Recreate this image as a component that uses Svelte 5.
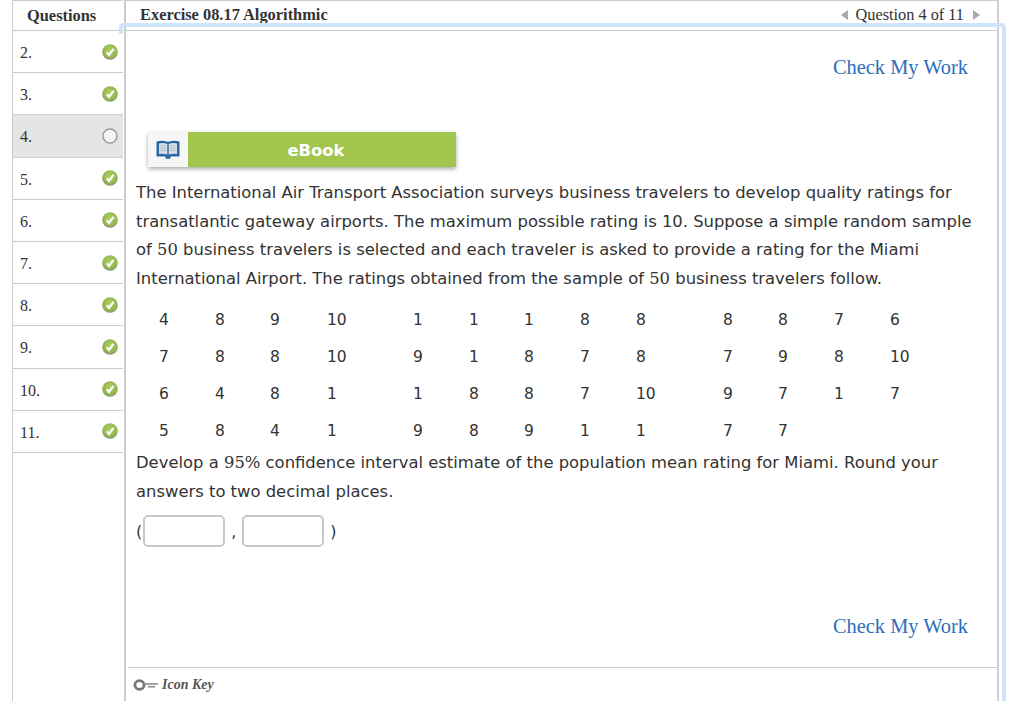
<script>
  const questions = [
    { n: 2, done: true }, { n: 3, done: true }, { n: 4, done: false, current: true },
    { n: 5, done: true }, { n: 6, done: true }, { n: 7, done: true }, { n: 8, done: true },
    { n: 9, done: true }, { n: 10, done: true }, { n: 11, done: true }
  ];

  const ratings = [
    [4, 8, 9, 10, 1, 1, 1, 8, 8, 8, 8, 7, 6],
    [7, 8, 8, 10, 9, 1, 8, 7, 8, 7, 9, 8, 10],
    [6, 4, 8, 1, 1, 8, 8, 7, 10, 9, 7, 1, 7],
    [5, 8, 4, 1, 9, 8, 9, 1, 1, 7, 7]
  ];
</script>

<div class="page">
  <aside class="sidebar">
    <div class="side-head">Questions</div>
    {#each questions as q}
      <div class="q-row" class:current={q.current}>
        <span class="q-num">{q.n}.</span>
        {#if q.done}
          <svg class="status" width="16" height="16" viewBox="0 0 16 16">
            <defs>
              <radialGradient id="g{q.n}" cx="0.5" cy="0.4" r="0.6">
                <stop offset="0" stop-color="#b0cf6a" />
                <stop offset="0.72" stop-color="#93b84b" />
                <stop offset="1" stop-color="#87927a" />
              </radialGradient>
            </defs>
            <circle cx="8" cy="8" r="7.8" fill="url(#g{q.n})" />
            <path d="M4.8 8.2 L7 11 L11.6 4.8" fill="none" stroke="#fff" stroke-width="2.2" />
          </svg>
        {:else}
          <svg class="status" width="16" height="16" viewBox="0 0 16 16">
            <circle cx="8" cy="8" r="7" fill="#f4f4f4" stroke="#9a9a9a" stroke-width="1.4" />
          </svg>
        {/if}
      </div>
    {/each}
  </aside>

  <main class="main">
    <header class="main-head">
      <div class="title">Exercise 08.17 Algorithmic</div>
      <div class="pager">
        <i class="arrow left"></i>
        <span>Question 4 of 11</span>
        <i class="arrow right"></i>
      </div>
    </header>

    <div class="content">
      <a class="check top" href="#check">Check My Work</a>

      <div class="ebook">
        <div class="ebook-icon">
          <svg width="24" height="20" viewBox="0 0 24 20">
            <path d="M0.5 1.5 Q7 0 12 2 Q17 0 23.5 1.5 V16.5 H14.5 V18.8 H9.5 V16.5 H0.5 Z" fill="#2a66a3" />
            <path d="M3 3.4 Q8 2.4 11.3 4 V14.4 Q8 13.4 3 14 Z" fill="#d5dfe5" />
            <path d="M21 3.4 Q16 2.4 12.7 4 V14.4 Q16 13.4 21 14 Z" fill="#d5dfe5" />
            <path d="M4.6 6 H10 M4.6 8.3 H10 M4.6 10.6 H10 M14 6 H19.4 M14 8.3 H19.4 M14 10.6 H19.4" stroke="#a9b8c3" stroke-width="0.8" />
          </svg>
        </div>
        <div class="ebook-label">eBook</div>
      </div>

      <p class="text">
        The International Air Transport Association surveys business travelers to develop quality ratings for
        transatlantic gateway airports. The maximum possible rating is 10. Suppose a simple random sample
        of <span class="num">50</span> business travelers is selected and each traveler is asked to provide a rating for the Miami
        International Airport. The ratings obtained from the sample of <span class="num">50</span> business travelers follow.
      </p>

      <div class="ratings">
        {#each ratings as row}
          {#each row as value}
            <div>{value}</div>
          {/each}
        {/each}
      </div>

      <p class="text after">
        Develop a <span class="num">95%</span> confidence interval estimate of the population mean rating for Miami. Round your
        answers to two decimal places.
      </p>

      <div class="answers">
        <span>(</span>
        <input type="text" aria-label="Lower limit" />
        <span class="comma">,</span>
        <input type="text" aria-label="Upper limit" />
        <span class="close">)</span>
      </div>

      <a class="check bottom" href="#check">Check My Work</a>
    </div>

    <footer class="icon-key">
      <svg width="26" height="14" viewBox="0 0 26 14">
        <ellipse cx="6.5" cy="7" rx="4.6" ry="4.4" fill="none" stroke="#777" stroke-width="2.8" />
        <path d="M11 6 H25 M15 8.8 H22" stroke="#858585" stroke-width="1.6" />
      </svg>
      <em>Icon Key</em>
    </footer>
  </main>

  <div class="focus-frame"></div>
</div>

<style>
  :global(body) {
    margin: 0;
    background: #fff;
  }

  .page {
    position: relative;
    display: flex;
    width: 1024px;
    height: 701px;
    overflow: hidden;
    padding-left: 12px;
    box-sizing: border-box;
    color: #333;
    font-family: "Liberation Serif", serif;
  }

  .sidebar {
    width: 110px;
    flex: none;
    border-left: 1px solid #ccc;
  }

  .side-head {
    height: 31px;
    box-sizing: border-box;
    padding: 5px 0 0 14px;
    border-top: 1px solid #ccc;
    border-bottom: 1px solid #ccc;
    font-size: 16.4px;
    font-weight: bold;
    color: #333;
  }

  .q-row {
    display: flex;
    align-items: center;
    justify-content: space-between;
    height: 42.2px;
    box-sizing: border-box;
    padding: 0 5px 0 7px;
    border-bottom: 1px solid #ccc;
    font-size: 16px;
  }

  .q-num {
    padding-top: 3px;
  }

  .q-row.current {
    background: #e5e5e5;
    border-top: 1px solid #ccc;
    margin-top: -1px;
    height: 43.2px;
  }

  .main {
    flex: none;
    width: 875px;
    height: 701px;
    box-sizing: border-box;
    margin-left: 1px;
    display: flex;
    flex-direction: column;
    border-left: 2px solid #ccc;
    border-right: 2px solid #d0d0d0;
  }

  .main-head {
    height: 31px;
    flex: none;
    box-sizing: border-box;
    display: flex;
    justify-content: space-between;
    padding: 4px 17px 0 14px;
    border-top: 1px solid #ccc;
    border-bottom: 1px solid #ccc;
    font-size: 16.4px;
  }

  .title {
    font-weight: bold;
  }

  .pager {
    display: flex;
    align-items: flex-start;
    gap: 8px;
    font-size: 16.3px;
  }

  .arrow {
    width: 0;
    height: 0;
    margin-top: 5px;
    border-top: 5.5px solid transparent;
    border-bottom: 5.5px solid transparent;
  }

  .arrow.left {
    border-right: 7px solid #aaa;
  }

  .arrow.right {
    border-left: 7px solid #aaa;
    margin-left: 1px;
  }

  .content {
    flex: 1;
    display: flex;
    flex-direction: column;
    padding: 0 0 0 10px;
  }

  .check {
    align-self: flex-end;
    margin-right: 29px;
    font-family: "Liberation Serif", serif;
    font-size: 20.4px;
    color: #2a6ebb;
    text-decoration: none;
  }

  .check.top {
    margin-top: 25px;
  }

  .check.bottom {
    margin-top: auto;
    margin-bottom: 29px;
  }

  .ebook {
    display: flex;
    width: 308px;
    height: 35px;
    margin: 53px 0 0 12px;
    box-shadow: 0 2px 4px rgba(0, 0, 0, 0.35);
    border-radius: 2px;
  }

  .ebook-icon {
    width: 40px;
    display: flex;
    align-items: center;
    justify-content: center;
    background: #f6f6f6;
  }

  .ebook-label {
    flex: 1;
    display: flex;
    align-items: center;
    justify-content: center;
    padding: 2px 12px 0 0;
    box-sizing: border-box;
    background: #a2c64d;
    color: #fff;
    font: bold 16.4px "DejaVu Sans", sans-serif;
  }

  .text {
    margin: 12px 0 0;
    font: 16.4px/28.7px "DejaVu Sans", sans-serif;
    color: #333;
    width: 838px;
  }

  .text.after {
    margin-top: -1px;
  }

  .num {
    font-family: "DejaVu Serif", serif;
  }

  .ratings {
    display: grid;
    grid-template-columns: 56px 55px 57px 86px 56px 55px 56px 56px 87px 55px 56px 56px 40px;
    grid-auto-rows: 37px;
    align-items: center;
    padding-left: 23px;
    margin-top: 8px;
    font: 15.5px "DejaVu Sans", sans-serif;
    color: #333;
  }

  .answers {
    display: flex;
    align-items: center;
    margin-top: 9px;
    font: 16px "DejaVu Sans", sans-serif;
  }

  .answers input {
    width: 82px;
    height: 32px;
    box-sizing: border-box;
    margin: 0 1px;
    border: 2px solid #c8c8c8;
    border-radius: 5px;
    background: #fff;
  }

  .comma {
    width: 15px;
    text-align: center;
  }

  .close {
    margin-left: 5px;
  }

  .icon-key {
    height: 34px;
    flex: none;
    box-sizing: border-box;
    display: flex;
    align-items: center;
    gap: 3px;
    margin-left: 2px;
    padding-left: 5px;
    border-top: 1px solid #ccc;
    font: bold italic 14px "Liberation Serif", serif;
    color: #555;
  }

  .focus-frame {
    position: absolute;
    left: 123px;
    top: 23px;
    width: 883px;
    height: 700px;
    box-sizing: border-box;
    border-top: 4.5px solid #cfe3fc;
    border-right: 4.5px solid #cfe3fc;
    border-top-right-radius: 5px;
    pointer-events: none;
  }

  .focus-frame::before {
    content: "";
    position: absolute;
    left: -4px;
    top: -4.5px;
    width: 4px;
    height: 11px;
    background: #cfe3fc;
    border-top-left-radius: 5px;
  }
</style>
